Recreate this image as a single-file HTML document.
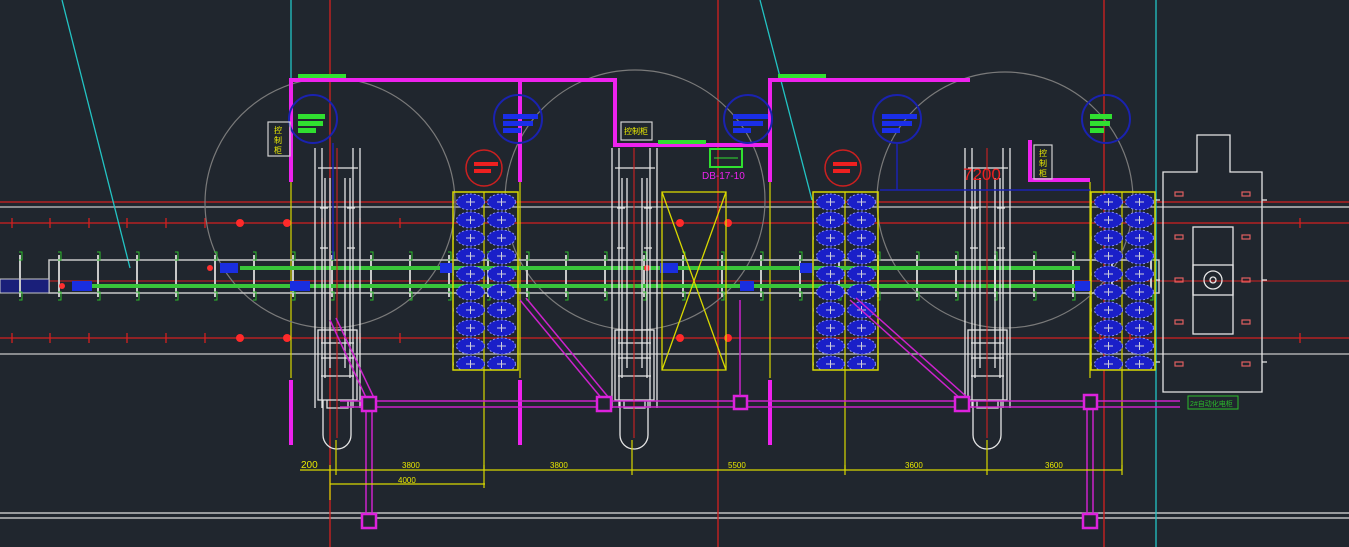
<!DOCTYPE html>
<html><head><meta charset="utf-8"><style>
html,body{margin:0;padding:0;background:#20262e;overflow:hidden}
svg{display:block}
text{font-family:"Liberation Sans","Noto Sans CJK SC",sans-serif}
</style></head><body>
<svg width="1349" height="547" viewBox="0 0 1349 547" xmlns="http://www.w3.org/2000/svg">
<defs>
<pattern id="pal" x="455" y="193" width="31" height="18" patternUnits="userSpaceOnUse">
<ellipse cx="15.5" cy="9" rx="14" ry="8" fill="#1a1fc8" stroke="#8890ff" stroke-width="1" stroke-dasharray="2 2"/>
<path d="M11 9h9M15.5 5v8" stroke="#ccd" stroke-width="1"/>
</pattern>
<pattern id="pal2" x="815" y="193" width="31" height="18" patternUnits="userSpaceOnUse">
<ellipse cx="15.5" cy="9" rx="14" ry="8" fill="#1a1fc8" stroke="#8890ff" stroke-width="1" stroke-dasharray="2 2"/>
<path d="M11 9h9M15.5 5v8" stroke="#ccd" stroke-width="1"/>
</pattern>
<pattern id="pal3" x="1093" y="193" width="31" height="18" patternUnits="userSpaceOnUse">
<ellipse cx="15.5" cy="9" rx="14" ry="8" fill="#1a1fc8" stroke="#8890ff" stroke-width="1" stroke-dasharray="2 2"/>
<path d="M11 9h9M15.5 5v8" stroke="#ccd" stroke-width="1"/>
</pattern>
<pattern id="ties" x="58" y="0" width="39" height="547" patternUnits="userSpaceOnUse">
<rect x="0" y="255" width="2" height="42" fill="#c8c8c8"/>
<rect x="-1" y="252" width="4" height="8" fill="none" stroke="#2bbd2b" stroke-width="1"/>
<rect x="-1" y="292" width="4" height="8" fill="none" stroke="#2bbd2b" stroke-width="1"/>
</pattern>
<g id="mach" fill="none" stroke="#e6e6e6" stroke-width="1.3">
<path d="M0 0v260M7 0v260M38 0v260M45 0v260"/>
<path d="M3 20h40M10 30v200M35 30v200M15 30v190M30 30v190M5 60h8M32 60h8M5 100h8M32 100h8"/>
<path d="M3 182h39v70h-39zM6 195h33M6 210h33M6 228h33M12 252v8h21v-8"/>
<path d="M8 252v35a14 14 0 0 0 28 0v-35"/>
<path d="M22 0v290" stroke="#e02020" stroke-width="1"/>
</g>
</defs>

<line x1="0" y1="202" x2="1349" y2="202" stroke="#d42020" stroke-width="1.3"/>
<line x1="0" y1="207" x2="1349" y2="207" stroke="#c8c8c8" stroke-width="1.3"/>
<line x1="0" y1="223" x2="1349" y2="223" stroke="#d42020" stroke-width="1.3"/>
<line x1="0" y1="338" x2="1349" y2="338" stroke="#d42020" stroke-width="1.3"/>
<line x1="0" y1="354" x2="1349" y2="354" stroke="#c8c8c8" stroke-width="1.3"/>
<line x1="0" y1="281" x2="1349" y2="281" stroke="#d42020" stroke-width="1"/>
<line x1="0" y1="513" x2="1349" y2="513" stroke="#e0e0e0" stroke-width="1.3"/>
<line x1="0" y1="518" x2="1349" y2="518" stroke="#e0e0e0" stroke-width="1.3"/>
<g stroke="#d42020" stroke-width="1.3">
<path d="M12 218v10M50 218v10M89 218v10M127 218v10M166 218v10M205 218v10M322 218v10M360 218v10M400 218v10M1100 218v10M1130 218v10M1300 218v10"/>
<path d="M12 333v10M50 333v10M89 333v10M127 333v10M166 333v10M205 333v10M322 333v10M360 333v10M400 333v10M1100 333v10M1130 333v10M1300 333v10"/>
</g>
<g fill="#ff2a2a">
<circle cx="240" cy="223" r="4"/><circle cx="287" cy="223" r="4"/><circle cx="680" cy="223" r="4"/><circle cx="728" cy="223" r="4"/>
<circle cx="240" cy="338" r="4"/><circle cx="287" cy="338" r="4"/><circle cx="680" cy="338" r="4"/><circle cx="728" cy="338" r="4"/>
</g>

<line x1="330" y1="0" x2="330" y2="547" stroke="#d42020" stroke-width="1.3"/>
<line x1="718" y1="0" x2="718" y2="547" stroke="#d42020" stroke-width="1.3"/>
<line x1="1104" y1="0" x2="1104" y2="547" stroke="#d42020" stroke-width="1.3"/>
<line x1="291" y1="0" x2="291" y2="182" stroke="#22c4c4" stroke-width="1.3"/>
<line x1="1156" y1="0" x2="1156" y2="547" stroke="#22c4c4" stroke-width="1.3"/>
<line x1="62" y1="0" x2="130" y2="268" stroke="#22c4c4" stroke-width="1.3"/>
<line x1="760" y1="0" x2="812" y2="200" stroke="#22c4c4" stroke-width="1.3"/>
<g stroke="#d8d800" stroke-width="1.2">
<line x1="291" y1="182" x2="291" y2="378"/><line x1="520" y1="182" x2="520" y2="378"/>
<line x1="770" y1="182" x2="770" y2="378"/><line x1="1090" y1="182" x2="1090" y2="378"/>
<line x1="484" y1="192" x2="484" y2="470"/><line x1="845" y1="192" x2="845" y2="470"/>
<line x1="1122" y1="192" x2="1122" y2="470"/>
</g>

<g fill="none" stroke="#7a7a7a" stroke-width="1.2">
<circle cx="330" cy="203" r="125"/><circle cx="635" cy="200" r="130"/><circle cx="1005" cy="200" r="128"/>
</g>

<rect x="49" y="260" width="1110" height="33" fill="none" stroke="#c8c8c8" stroke-width="1.5"/>
<rect x="0" y="279" width="49" height="14" fill="#1a1f7a" stroke="#c8c8c8"/>
<rect x="0" y="0" width="1160" height="547" fill="url(#ties)"/>
<line x1="75" y1="286" x2="1080" y2="286" stroke="#39c43a" stroke-width="4"/>
<line x1="240" y1="268" x2="1080" y2="268" stroke="#39c43a" stroke-width="4"/>
<g fill="#1a2ee0">
<rect x="72" y="281" width="20" height="10"/><rect x="220" y="263" width="18" height="10"/><rect x="290" y="281" width="20" height="10"/>
<rect x="440" y="263" width="14" height="10"/><rect x="660" y="263" width="18" height="10"/><rect x="740" y="281" width="14" height="10"/>
<rect x="800" y="263" width="14" height="10"/><rect x="1075" y="281" width="16" height="10"/>
</g>
<g fill="#ff3030"><circle cx="62" cy="286" r="3"/><circle cx="210" cy="268" r="3"/><circle cx="647" cy="268" r="3"/></g>

<use href="#mach" x="315" y="148"/>
<use href="#mach" x="612" y="148"/>
<use href="#mach" x="965" y="148"/>

<rect x="453" y="192" width="65" height="178" fill="url(#pal)" stroke="#d8d800" stroke-width="1.5"/>
<rect x="813" y="192" width="65" height="178" fill="url(#pal2)" stroke="#d8d800" stroke-width="1.5"/>
<rect x="1091" y="192" width="64" height="178" fill="url(#pal3)" stroke="#d8d800" stroke-width="1.5"/>
<g fill="none" stroke="#d8d800" stroke-width="1.3">
<rect x="662" y="192" width="64" height="178"/><path d="M662 192L726 370M726 192L662 370"/>
</g>

<g fill="none" stroke="#e6e6e6" stroke-width="1.3">
<path d="M1163 172h34v-37h33v37h32v220h-99z"/>
<rect x="1193" y="227" width="40" height="107"/><rect x="1193" y="265" width="40" height="30"/>
<circle cx="1213" cy="280" r="9"/><circle cx="1213" cy="280" r="3"/>
<path d="M1160 200h-4M1160 280h-4M1160 362h-4M1262 200h5M1262 280h5M1262 362h5"/>
<line x1="1262" y1="207" x2="1349" y2="207" stroke="#c8c8c8"/>
</g>
<g fill="none" stroke="#e06060" stroke-width="1.2">
<rect x="1175" y="192" width="8" height="4"/><rect x="1242" y="192" width="8" height="4"/>
<rect x="1175" y="235" width="8" height="4"/><rect x="1242" y="235" width="8" height="4"/>
<rect x="1175" y="278" width="8" height="4"/><rect x="1242" y="278" width="8" height="4"/>
<rect x="1175" y="320" width="8" height="4"/><rect x="1242" y="320" width="8" height="4"/>
<rect x="1175" y="362" width="8" height="4"/><rect x="1242" y="362" width="8" height="4"/>
</g>
<rect x="1188" y="396" width="50" height="13" fill="none" stroke="#2bbd2b"/>
<text x="1190" y="406" font-size="7" fill="#2bbd2b">2#自动化电柜</text>

<g fill="none" stroke="#ee22ee" stroke-width="4">
<path d="M291 182V80H615V145H770"/><path d="M520 80V182"/>
<path d="M770 182V80H970"/><path d="M1030 140V180H1090"/>
<path d="M291 380V445M520 380V445M770 380V445"/>
</g>
<g fill="none" stroke="#cc22cc" stroke-width="1.5">
<path d="M340 401H1180M340 407H1180"/>
<path d="M366 404V521M372 404V521M1087 404V521M1093 404V521"/>
<path d="M330 320L369 404M336 318L375 400M520 300L603 400M526 298L609 398M850 300L962 400M856 298L968 398"/>
</g>
<g fill="#20262e" stroke="#dd22dd" stroke-width="2.5">
<rect x="362" y="397" width="14" height="14"/><rect x="597" y="397" width="14" height="14"/>
<rect x="734" y="396" width="13" height="13"/><rect x="955" y="397" width="14" height="14"/>
<rect x="1084" y="395" width="13" height="14"/><rect x="362" y="514" width="14" height="14"/>
<rect x="1083" y="514" width="14" height="14"/>
</g>
<line x1="740" y1="300" x2="740" y2="396" stroke="#cc22cc" stroke-width="1.5"/>

<g fill="#30e030">
<rect x="298" y="74" width="48" height="4"/><rect x="658" y="140" width="48" height="4"/><rect x="778" y="74" width="48" height="4"/>
</g>

<g fill="none" stroke="#1a22b0" stroke-width="2">
<circle cx="313" cy="119" r="24"/><circle cx="518" cy="119" r="24"/><circle cx="748" cy="119" r="24"/>
<circle cx="897" cy="119" r="24"/><circle cx="1106" cy="119" r="24"/>
</g>
<g stroke="#1a22b0" stroke-width="1.5" fill="none"><path d="M333 143V260M897 143V190M880 190H1090"/></g>
<g fill="#30e030"><rect x="298" y="114" width="27" height="5"/><rect x="298" y="121" width="25" height="5"/><rect x="298" y="128" width="18" height="5"/>
<rect x="1090" y="114" width="22" height="5"/><rect x="1090" y="121" width="20" height="5"/><rect x="1090" y="128" width="14" height="5"/></g>
<g fill="#1a2ee8"><rect x="503" y="114" width="35" height="5"/><rect x="503" y="121" width="30" height="5"/><rect x="503" y="128" width="18" height="5"/>
<rect x="733" y="114" width="35" height="5"/><rect x="733" y="121" width="30" height="5"/><rect x="733" y="128" width="18" height="5"/>
<rect x="882" y="114" width="35" height="5"/><rect x="882" y="121" width="30" height="5"/><rect x="882" y="128" width="18" height="5"/></g>
<g fill="none" stroke="#cc2020" stroke-width="1.5"><circle cx="484" cy="168" r="18"/><circle cx="843" cy="168" r="18"/></g>
<g fill="#ee2020"><rect x="474" y="162" width="24" height="4"/><rect x="474" y="169" width="17" height="4"/>
<rect x="833" y="162" width="24" height="4"/><rect x="833" y="169" width="17" height="4"/></g>

<g fill="none" stroke="#d0d0d0" stroke-width="1.2">
<rect x="268" y="122" width="22" height="34"/><rect x="621" y="122" width="31" height="18"/><rect x="1034" y="145" width="18" height="34"/>
</g>
<g fill="#f0f000" font-size="8">
<text x="274" y="133">控</text><text x="274" y="143">制</text><text x="274" y="153">柜</text>
<text x="624" y="134">控制柜</text>
<text x="1039" y="156">控</text><text x="1039" y="166">制</text><text x="1039" y="176">柜</text>
</g>
<rect x="710" y="149" width="32" height="18" fill="none" stroke="#30e030" stroke-width="2"/>
<line x1="714" y1="158" x2="738" y2="158" stroke="#30e030"/>
<text x="702" y="179" font-size="10" fill="#ee22ee">DB-17-10</text>
<text x="963" y="180" font-size="17" fill="#ee2020">7200</text>

<g stroke="#d8d800" stroke-width="1.2" fill="none">
<path d="M300 470H1122M330 484H485M330 465V500M336 440V475M484 465V488M632 440V475M845 465V475M987 440V475M1122 465V475"/>
</g>
<g fill="#e8e800" font-size="8">
<text x="301" y="468" font-size="10">200</text><text x="402" y="468">3800</text><text x="550" y="468">3800</text>
<text x="728" y="468">5500</text><text x="905" y="468">3600</text><text x="1045" y="468">3600</text>
<text x="398" y="483">4000</text>
</g>
</svg>
</body></html>
